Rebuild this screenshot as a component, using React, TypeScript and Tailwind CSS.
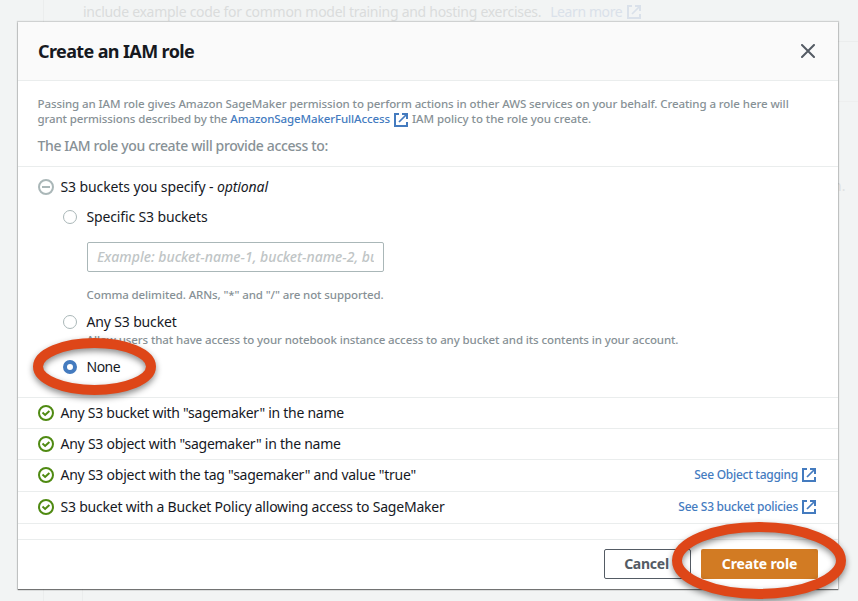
import React from 'react';

const ExternalIcon = ({ className = '' }: { className?: string }) => (
  <svg viewBox="0 0 14 14" fill="none" stroke="currentColor" strokeWidth="2" className={`w-3.5 h-3.5 shrink-0 ${className}`}>
    <path d="M5 1H1v12h12V9" />
    <path d="M8 1h5v5" />
    <path d="M12.5 1.5L5 9" strokeWidth="1.7" />
  </svg>
);

const CheckIcon = () => (
  <svg viewBox="0 0 16 16" fill="none" stroke="#4f8a12" strokeWidth="2" className="w-4 h-4 shrink-0">
    <circle cx="8" cy="8" r="7" />
    <path d="M4.5 7.6l2.6 2.3 4.3-4" />
  </svg>
);

const MinusIcon = () => (
  <svg viewBox="0 0 16 16" fill="none" stroke="#aab7b8" strokeWidth="2" className="w-4 h-4 shrink-0">
    <circle cx="8" cy="8" r="7" />
    <path d="M4 8h8" />
  </svg>
);

const Radio = ({ checked = false }: { checked?: boolean }) => (
  <span
    className={`w-3.5 h-3.5 shrink-0 rounded-full bg-white ${checked ? 'border-4 border-[#447bbf]' : 'border border-[#aab7b8]'}`}
  />
);

interface Permission {
  text: string;
  rowClass: string;
  textClass: string;
  link?: string;
  linkClass?: string;
}

const permissions: Permission[] = [
  { text: 'Any S3 bucket with "sagemaker" in the name', rowClass: 'h-[31px]', textClass: 'tracking-[-0.27px]' },
  { text: 'Any S3 object with "sagemaker" in the name', rowClass: 'h-[31px]', textClass: 'tracking-[-0.25px]' },
  { text: 'Any S3 object with the tag "sagemaker" and value "true"', rowClass: 'h-8 pb-px', textClass: 'tracking-[-0.24px]', link: 'See Object tagging', linkClass: 'tracking-[-0.27px]' },
  { text: 'S3 bucket with a Bucket Policy allowing access to SageMaker', rowClass: 'h-8 pb-px', textClass: 'tracking-[-0.22px]', link: 'See S3 bucket policies', linkClass: 'tracking-[-0.26px]' },
];

export default function App() {
  return (
    <div className="relative w-[858px] h-[601px] overflow-hidden bg-[#f2f4f4] font-['Noto_Sans','Open_Sans',sans-serif] text-sm text-[#16191f] whitespace-nowrap">
      {/* dimmed page behind the dialog */}
      <div className="absolute left-[43px] top-0 h-full w-px bg-[#ebeded]" />
      <div className="absolute left-[82px] bottom-0 h-3 w-px bg-[#ebeded]" />
      <div className="absolute right-0 top-[41px] h-px w-5 bg-[#ebeded]" />
      <div className="absolute right-0 top-[101px] h-px w-5 bg-[#eeefef]" />
      <div className="absolute left-[83px] top-[2px] flex items-center leading-5 text-[#dadcdc]">
        <span className="tracking-[-0.28px]">include example code for common model training and hosting exercises.</span>
        <span className="ml-[9px] tracking-[-0.4px] text-[#dae1ea]">Learn more</span>
        <ExternalIcon className="ml-[5px] text-[#dae1ea]" />
      </div>
      <div className="absolute left-[833px] top-[176px] leading-5 text-[#dfe1e2]">n.</div>

      <div className="relative pt-[22px] pl-[18px]">
        <div className="w-[820px] h-[567px] bg-white flex flex-col shadow-[0_1px_1px_0_rgba(0,0,0,0.45),0_0_1px_1px_rgba(0,0,0,0.14)]">
          <header className="h-[59px] shrink-0 flex items-center justify-between bg-[#fafafa] border-b border-[#eaeded] pl-5 pr-[23px]">
            <h2 className="text-lg font-bold tracking-[-0.62px]">Create an IAM role</h2>
            <svg viewBox="0 0 14 14" className="w-3.5 h-3.5" stroke="#545b64" strokeWidth="2" strokeLinecap="round">
              <path d="M1 1l12 12M13 1L1 13" />
            </svg>
          </header>

          <section className="h-[86px] shrink-0 border-b border-[#eaeded] pl-[19.5px] pr-5 pt-[15px] text-[#879196] font-medium">
            <p className="text-[11.5px] leading-[15px] tracking-[-0.08px]">Passing an IAM role gives Amazon SageMaker permission to perform actions in other AWS services on your behalf. Creating a role here will</p>
            <p className="text-[11.5px] leading-[15px] tracking-[-0.11px] h-[15px] flex items-center">
              <span>grant permissions described by the&nbsp;</span>
              <a className="text-[#447bbf]">AmazonSageMakerFullAccess</a>
              <ExternalIcon className="ml-1 mr-1 mt-[3px] text-[#447bbf]" />
              <span className="tracking-[-0.06px]">IAM policy to the role you create.</span>
            </p>
            <h3 className="mt-[10px] leading-5 tracking-[-0.37px]">The IAM role you create will provide access to:</h3>
          </section>

          <section className="h-[231px] shrink-0 border-b border-[#eaeded] pl-5 pt-[10px]">
            <div className="h-5 flex items-center gap-[6.5px]">
              <MinusIcon />
              <span className="tracking-[-0.11px]">S3 buckets you specify - <em>optional</em></span>
            </div>
            <div className="pl-[25px]">
              <label className="mt-[10px] h-5 flex items-center gap-[9.5px]">
                <Radio />
                <span className="tracking-[-0.14px]">Specific S3 buckets</span>
              </label>
              <div className="ml-6 mt-[15px] w-[297px] h-[30px] rounded-[2px] border border-[#aab7b8] px-[9px]">
                <div className="h-full overflow-hidden flex items-center italic font-medium text-[#c0c5c6] tracking-[0px]">
                  Example: bucket-name-1, bucket-name-2, bucket-name-3
                </div>
              </div>
              <p className="ml-[23.5px] mt-[15px] text-[11.5px] leading-4 font-medium text-[#879196] tracking-[-0.1px]">Comma delimited. ARNs, "*" and "/" are not supported.</p>
              <label className="mt-[9px] h-5 flex items-center gap-[9.5px]">
                <Radio />
                <span className="tracking-[-0.15px]">Any S3 bucket</span>
              </label>
              <p className="ml-[23.5px] text-[11.5px] leading-4 font-medium text-[#879196] tracking-[-0.1px]">Allow users that have access to your notebook instance access to any bucket and its contents in your account.</p>
              <label className="mt-[9px] h-5 flex items-center gap-[9.5px]">
                <Radio checked />
                <span className="tracking-[-0.5px]">None</span>
              </label>
            </div>
          </section>

          {permissions.map((item) => (
            <div key={item.text} className={`${item.rowClass} shrink-0 flex items-center gap-[6.5px] border-b border-[#eaeded] pl-5 pr-[22px]`}>
              <CheckIcon />
              <span className={item.textClass}>{item.text}</span>
              {item.link && (
                <a className="ml-auto flex items-center gap-1 text-xs font-medium text-[#447bbf]">
                  <span className={item.linkClass}>{item.link}</span>
                  <ExternalIcon />
                </a>
              )}
            </div>
          ))}

          <footer className="mt-[15px] border-t border-[#eaeded] flex justify-end gap-2.5 pt-[9px] pr-5">
            <button className="w-[87px] h-[30px] border border-[#545b64] rounded-[2px] font-bold text-[#545b64] tracking-[-0.25px] pr-0.5">Cancel</button>
            <button className="w-[117px] h-[30px] bg-[#d27b23] rounded-[2px] font-bold text-white tracking-[-0.15px]">Create role</button>
          </footer>
        </div>
      </div>

      {/* highlight rings */}
      <svg viewBox="0 0 858 601" className="absolute inset-0 w-[858px] h-[601px] pointer-events-none drop-shadow-[0_3px_3px_rgba(0,0,0,0.45)]" fill="none" stroke="#de4618" strokeWidth="10">
        <ellipse cx="94.5" cy="366.5" rx="56.5" ry="23.5" />
        <ellipse cx="759" cy="560.5" rx="82" ry="33.5" />
      </svg>
    </div>
  );
}
